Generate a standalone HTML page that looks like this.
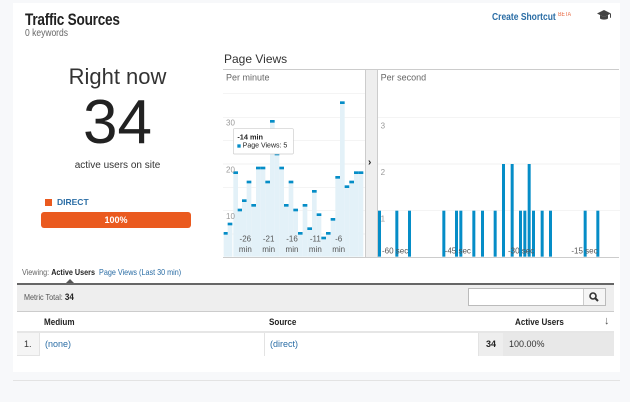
<!DOCTYPE html>
<html><head><style>
*{margin:0;padding:0;box-sizing:border-box}
body{width:630px;height:402px;background:#f7f8fa;font-family:"Liberation Sans",sans-serif;position:relative;overflow:hidden;color:#222}
.a{position:absolute}
.c{transform-origin:0 0;transform:scaleX(0.85);white-space:nowrap}
</style></head><body>
<div class="a" style="left:13px;top:3px;width:607px;height:369px;background:#fff"></div>
<div class="a" style="left:13px;top:380px;width:607px;height:1px;background:#e3e3e3"></div>
<div class="a c" style="left:25px;top:10px;font-size:17px;font-weight:bold;letter-spacing:-0.3px;transform:scaleX(0.8)">Traffic Sources</div>
<div class="a c" style="left:25px;top:28px;font-size:10px;color:#666">0 keywords</div>
<div class="a c" style="left:492px;top:12px;font-size:10px;font-weight:bold;color:#2a6da5">Create Shortcut <span style="font-size:6px;color:#e8643c;font-weight:normal;vertical-align:top">BETA</span></div>
<svg class="a" style="left:596px;top:9px" width="16" height="12" viewBox="0 0 16 12"><path d="M8 1L15 4.5 8 8 1 4.5z" fill="#444"/><path d="M4 6v3.5c2 1.5 6 1.5 8 0V6L8 8z" fill="#444"/><path d="M14.5 4.7v4" stroke="#444" stroke-width="1"/></svg>

<div class="a" style="left:20px;top:64px;width:195px;text-align:center;font-size:22px;color:#333">Right now</div>
<div class="a" style="left:20px;top:88px;width:195px;text-align:center;font-size:62px;color:#222;line-height:70px">34</div>
<div class="a" style="left:20px;top:160px;width:195px;text-align:center;font-size:10px;color:#333">active users on site</div>
<div class="a" style="left:45px;top:199px;width:7px;height:7px;background:#ea5a1f"></div>
<div class="a" style="left:57px;top:197px;font-size:8.5px;font-weight:bold;color:#2a6da5">DIRECT</div>
<div class="a" style="left:41px;top:212px;width:150px;height:16px;background:#ea5a1f;border-radius:3px;color:#fff;font-size:9px;font-weight:bold;text-align:center;line-height:16px">100%</div>

<div class="a" style="left:224px;top:52px;font-size:12px;color:#333">Page Views</div>
<div class="a" style="left:223px;top:69px;width:396px;height:1px;background:#ccc"></div>
<div class="a" style="left:223px;top:257px;width:396px;height:1px;background:#ccc"></div>
<div class="a" style="left:365px;top:70px;width:13px;height:187px;background:#eee;border-left:1px solid #ccc;border-right:1px solid #ccc"></div>
<div class="a" style="left:368px;top:157px;font-size:10px;font-weight:bold">›</div>

<svg class="a" style="left:220px;top:60px" width="145" height="200" viewBox="0 0 435 600">
<g stroke="#eee" stroke-width="2"><line x1="9" y1="100" x2="435" y2="100"/><line x1="9" y1="172" x2="435" y2="172"/><line x1="9" y1="242" x2="435" y2="242"/><line x1="9" y1="312" x2="435" y2="312"/><line x1="9" y1="382" x2="435" y2="382"/><line x1="9" y1="452" x2="435" y2="452"/><line x1="9" y1="522" x2="435" y2="522"/></g>
<g id="bars"></g>
<text x="18" y="62" font-size="27" fill="#666" font-family="Liberation Sans">Per minute</text>
<g font-size="24" fill="#999" font-family="Liberation Sans"><text x="18" y="197">30</text><text x="18" y="337">20</text><text x="18" y="477">10</text></g>
<g font-size="24" fill="#555" font-family="Liberation Sans" text-anchor="middle"><text x="76" y="545">-26</text><text x="76" y="576">min</text><text x="146" y="545">-21</text><text x="146" y="576">min</text><text x="216" y="545">-16</text><text x="216" y="576">min</text><text x="286" y="545">-11</text><text x="286" y="576">min</text><text x="356" y="545">-6</text><text x="356" y="576">min</text></g>
<rect x="40" y="206" width="180" height="76" fill="#fff" stroke="#ccc" stroke-width="2" rx="3"/>
<text x="52" y="238" font-size="22" font-weight="bold" fill="#222" font-family="Liberation Sans">-14 min</text>
<rect x="52" y="253" width="10" height="10" fill="#058dc7"/>
<text x="68" y="263" font-size="21" fill="#222" font-family="Liberation Sans">Page Views: 5</text>
</svg>

<svg class="a" style="left:370px;top:60px" width="250" height="200" viewBox="0 0 750 600">
<g stroke="#eee" stroke-width="2"><line x1="24" y1="172" x2="750" y2="172"/><line x1="24" y1="312" x2="750" y2="312"/><line x1="24" y1="452" x2="750" y2="452"/></g>
<g fill="#058dc7">
<rect x="24" y="452" width="9" height="138"/><rect x="76" y="452" width="9" height="138"/><rect x="114" y="452" width="9" height="138"/><rect x="217" y="452" width="9" height="138"/><rect x="255" y="452" width="9" height="138"/><rect x="268" y="452" width="9" height="138"/><rect x="307" y="452" width="9" height="138"/><rect x="333" y="452" width="9" height="138"/><rect x="371" y="452" width="9" height="138"/><rect x="396" y="312" width="9" height="278"/><rect x="422" y="312" width="9" height="278"/><rect x="447" y="452" width="9" height="138"/><rect x="460" y="452" width="9" height="138"/><rect x="473" y="312" width="9" height="278"/><rect x="486" y="452" width="9" height="138"/><rect x="512" y="452" width="9" height="138"/><rect x="537" y="452" width="9" height="138"/><rect x="641" y="452" width="9" height="138"/><rect x="679" y="452" width="9" height="138"/></g>
<text x="32" y="62" font-size="27" fill="#666" font-family="Liberation Sans">Per second</text>
<g font-size="24" fill="#999" font-family="Liberation Sans"><text x="32" y="205">3</text><text x="32" y="345">2</text><text x="32" y="485">1</text></g>
<g font-size="24" fill="#555" font-family="Liberation Sans"><text x="36" y="580">-60 sec</text><text x="224" y="580">-45 sec</text><text x="414" y="580">-30 sec</text><text x="604" y="580">-15 sec</text></g>
</svg>

<div class="a c" style="left:22px;top:267px;font-size:8.5px;color:#666">Viewing: <b style="color:#222">Active Users</b> &nbsp;<span style="color:#2a6da5">Page Views (Last 30 min)</span></div>
<div class="a" style="left:66px;top:279px;width:0;height:0;border-left:4px solid transparent;border-right:4px solid transparent;border-bottom:4px solid #555"></div>
<div class="a" style="left:17px;top:283px;width:597px;height:29px;background:#eee;border-top:2px solid #666;border-bottom:1px solid #ccc"></div>
<div class="a c" style="left:24px;top:292px;font-size:8.5px;color:#555">Metric Total: <b style="color:#222;font-size:9.5px">34</b></div>
<div class="a" style="left:468px;top:288px;width:138px;height:18px;background:#fff;border:1px solid #bbb"></div>
<div class="a" style="left:583px;top:289px;width:22px;height:16px;background:#f5f5f5;border-left:1px solid #ccc"></div>
<svg class="a" style="left:588px;top:291px" width="12" height="12" viewBox="0 0 12 12"><circle cx="5" cy="5" r="3" fill="none" stroke="#333" stroke-width="1.6"/><path d="M7 7l3 3" stroke="#333" stroke-width="2"/></svg>
<div class="a" style="left:17px;top:312px;width:597px;height:21px;background:#fff;border-bottom:2px solid #e6e6e6"></div>
<div class="a c" style="left:44px;top:317px;font-size:9.5px;font-weight:bold">Medium</div>
<div class="a c" style="left:269px;top:317px;font-size:9.5px;font-weight:bold">Source</div>
<div class="a c" style="left:515px;top:317px;font-size:9.5px;font-weight:bold">Active Users</div>
<div class="a" style="left:604px;top:315px;font-size:11px;color:#555">↓</div>
<div class="a" style="left:17px;top:333px;width:597px;height:23px;background:#f5f5f5;border-bottom:1px solid #e3e3e3"></div>
<div class="a" style="left:39px;top:333px;width:225px;height:23px;border-left:1px solid #e3e3e3;background:#fff"></div>
<div class="a" style="left:264px;top:333px;width:214px;height:23px;border-left:1px solid #e3e3e3;background:#fff"></div>
<div class="a" style="left:478px;top:333px;width:25px;height:23px;border-left:1px solid #e3e3e3;background:#eee"></div>
<div class="a" style="left:503px;top:333px;width:111px;height:23px;background:#e8e8e8"></div>
<div class="a" style="left:24px;top:339px;font-size:9px;color:#333">1.</div>
<div class="a" style="left:45px;top:339px;font-size:9px;color:#2a6da5">(none)</div>
<div class="a" style="left:270px;top:339px;font-size:9px;color:#2a6da5">(direct)</div>
<div class="a" style="left:486px;top:339px;font-size:9px;font-weight:bold">34</div>
<div class="a" style="left:509px;top:339px;font-size:9px;color:#333">100.00%</div>

<script>
var caps=[[18,520],[30,492],[47,338],[60,450],[73,422],[87,366],[101,436],[115,324],[129,324],[143,366],[157,184],[171,282],[185,324],[199,436],[213,366],[227,450],[241,520],[255,436],[269,506],[283,394],[297,464],[311,534],[325,520],[339,478],[353,352],[367,128],[381,380],[395,366],[409,338],[423,338]];
var s='';caps.forEach(function(c){s+='<rect x="'+(c[0]-7)+'" y="'+c[1]+'" width="14" height="'+(590-c[1])+'" fill="#e3f1f8"/><rect x="'+(c[0]-7)+'" y="'+(c[1]-4)+'" width="14" height="8" fill="#058dc7"/>';});
document.getElementById('bars').innerHTML=s;
</script>
</body></html>
